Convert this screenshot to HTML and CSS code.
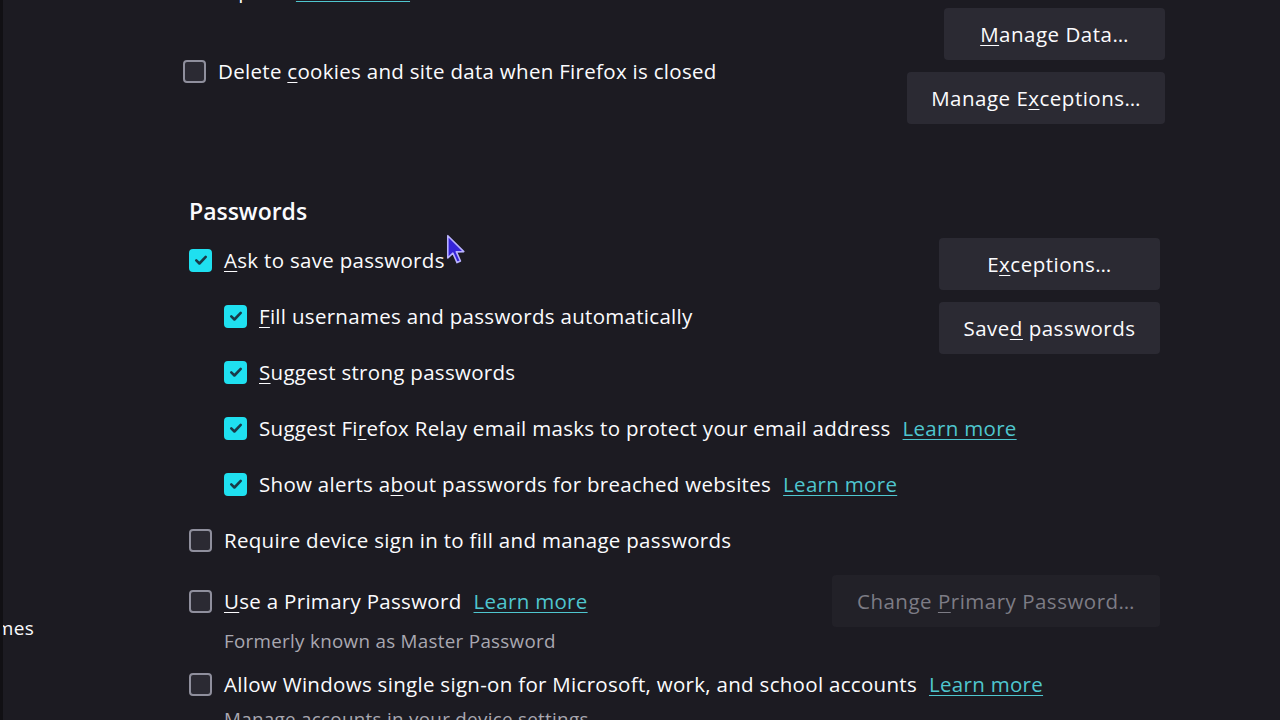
FILE: index.html
```html
<!DOCTYPE html>
<html lang="en">
<head>
<meta charset="utf-8">
<title>Settings - Privacy</title>
<link rel="stylesheet" href="styles.css">
</head>
<body>
<div class="page">
  <nav class="sidebar">
    <div class="nav-item"><span>Extensions &amp; Themes</span></div>
  </nav>
  <main class="main">
    <section class="sec1">
      <div class="col">
        <div class="cutline">disk space. <a class="link" href="#">Learn more</a></div>
        <label class="check-row first-check"><span class="cb"></span><span>Delete <u>c</u>ookies and site data when Firefox is closed</span></label>
      </div>
      <div class="btncol end">
        <div class="btn"><span><u>M</u>anage Data…</span></div>
        <div class="btn"><span>Manage E<u>x</u>ceptions…</span></div>
      </div>
    </section>

    <section class="pw">
      <h2 class="heading">Passwords</h2>
      <div class="pw-top">
        <div class="opts">
          <label class="check-row"><span class="cb on"><svg viewBox="0 0 16 16"><path d="M3.8 8.3l2.8 2.8L12.2 5.2"/></svg></span><span><u>A</u>sk to save passwords</span></label>
          <label class="check-row sub"><span class="cb on"><svg viewBox="0 0 16 16"><path d="M3.8 8.3l2.8 2.8L12.2 5.2"/></svg></span><span><u>F</u>ill usernames and passwords automatically</span></label>
          <label class="check-row sub"><span class="cb on"><svg viewBox="0 0 16 16"><path d="M3.8 8.3l2.8 2.8L12.2 5.2"/></svg></span><span><u>S</u>uggest strong passwords</span></label>
          <label class="check-row sub"><span class="cb on"><svg viewBox="0 0 16 16"><path d="M3.8 8.3l2.8 2.8L12.2 5.2"/></svg></span><span>Suggest Fi<u>r</u>efox Relay email masks to protect your email address</span><a class="link" href="#">Learn more</a></label>
          <label class="check-row sub"><span class="cb on"><svg viewBox="0 0 16 16"><path d="M3.8 8.3l2.8 2.8L12.2 5.2"/></svg></span><span>Show alerts a<u>b</u>out passwords for breached websites</span><a class="link" href="#">Learn more</a></label>
        </div>
        <div class="btncol stretch">
          <div class="btn"><span>E<u>x</u>ceptions…</span></div>
          <div class="btn"><span>Save<u>d</u> passwords</span></div>
        </div>
      </div>
      <label class="check-row require"><span class="cb"></span><span>Require device sign in to fill and manage passwords</span></label>
      <div class="split">
        <label class="check-row"><span class="cb"></span><span><u>U</u>se a Primary Password</span><a class="link" href="#">Learn more</a></label>
        <div class="btn disabled"><span>Change <u>P</u>rimary Password…</span></div>
      </div>
      <div class="note">Formerly known as Master Password</div>
      <label class="check-row allow"><span class="cb"></span><span>Allow Windows single sign-on for Microsoft, work, and school accounts</span><a class="link" href="#">Learn more</a></label>
      <div class="note note2">Manage accounts in your device settings</div>
    </section>
  </main>
  <svg class="cursor" viewBox="0 0 20 28" width="23" height="32"><path d="M1.5 1.5 L1.5 21 L6 16.8 L9.6 25 L12.6 23.6 L9 15.6 L15.5 15.4 Z" fill="#3524d8" stroke="#b9b2ff" stroke-width="1.4" stroke-linejoin="round"/></svg>
</div>
</body>
</html>
```

FILE: styles.css
```css
* {
  box-sizing: border-box;
}

body {
  margin: 0;
  background: #1c1b22;
  color: #fbfbfe;
  font-family: "Open Sans", "Noto Sans", sans-serif;
  font-size: 20.5px;
  letter-spacing: 0.3px;
}

.page {
  position: relative;
  display: flex;
  height: 720px;
  overflow: hidden;
}

.sidebar {
  width: 40px;
  flex: none;
  border-left: 3px solid #111014;
  padding-top: 614px;
}

.nav-item {
  display: flex;
  justify-content: flex-end;
  overflow: hidden;
  height: 28px;
  line-height: 28px;
  padding-right: 6px;
  white-space: nowrap;
  font-size: 19px;
}

.main {
  flex: 1;
  min-width: 0;
  padding: 0 120px 0 149px;
}

u {
  text-decoration-thickness: 1px;
  text-underline-offset: 3px;
}

.link {
  color: #4fc6cf;
  text-decoration: underline;
  text-decoration-thickness: 1px;
  text-underline-offset: 3px;
}

/* cookies section */
.sec1 {
  display: flex;
  justify-content: space-between;
  margin: -24px -5px 0 -6px;
}

.cutline {
  height: 28px;
  line-height: 28px;
  white-space: nowrap;
}

.first-check {
  margin-top: 53px;
}

.btncol {
  display: flex;
  flex-direction: column;
  gap: 12px;
  flex: none;
}

.btncol.end {
  align-items: flex-end;
  padding-top: 32px;
}

.btncol.stretch {
  align-items: stretch;
  margin-top: -8px;
}

.btn {
  min-width: 221px;
  height: 52px;
  padding: 0 24px;
  background: #2b2a33;
  border-radius: 4px;
  display: flex;
  align-items: center;
  justify-content: center;
  white-space: nowrap;
  letter-spacing: 0.5px;
}

.btn.disabled {
  background: #222128;
  color: #7d7c85;
  padding: 0 25px;
}

/* checkbox rows */
.check-row {
  display: flex;
  align-items: center;
  gap: 12px;
  height: 28px;
  white-space: nowrap;
}

.cb {
  width: 23px;
  height: 23px;
  flex: none;
  border: 2px solid #8f8f9d;
  border-radius: 4px;
  background: #2b2a33;
  display: flex;
  align-items: center;
  justify-content: center;
}

.cb.on {
  background: #1fe0f0;
  border-color: #1fe0f0;
}

.cb svg {
  width: 18px;
  height: 18px;
}

.cb svg path {
  fill: none;
  stroke: #1a3a48;
  stroke-width: 2.3;
  stroke-linecap: round;
  stroke-linejoin: round;
}

/* passwords */
.heading {
  margin: 72px 0 0;
  font-size: 23px;
  font-weight: 600;
  line-height: 30px;
  letter-spacing: 0;
}

.pw-top {
  display: flex;
  justify-content: space-between;
  align-items: flex-start;
  margin-top: 20px;
}

.opts {
  flex: 1;
  min-width: 0;
  display: flex;
  flex-direction: column;
  gap: 28px;
}

.sub {
  padding-left: 35px;
}

.require {
  margin-top: 28px;
}

.split {
  display: flex;
  justify-content: space-between;
  align-items: center;
  height: 52px;
  margin-top: 21px;
}

.note {
  color: #a9a8b1;
  font-size: 18.8px;
  line-height: 24px;
  padding-left: 35px;
  margin-top: 2px;
  white-space: nowrap;
}

.allow {
  margin-top: 17px;
}

.note.note2 {
  margin-top: 9px;
}

.cursor {
  position: absolute;
  left: 446px;
  top: 234px;
}
```
